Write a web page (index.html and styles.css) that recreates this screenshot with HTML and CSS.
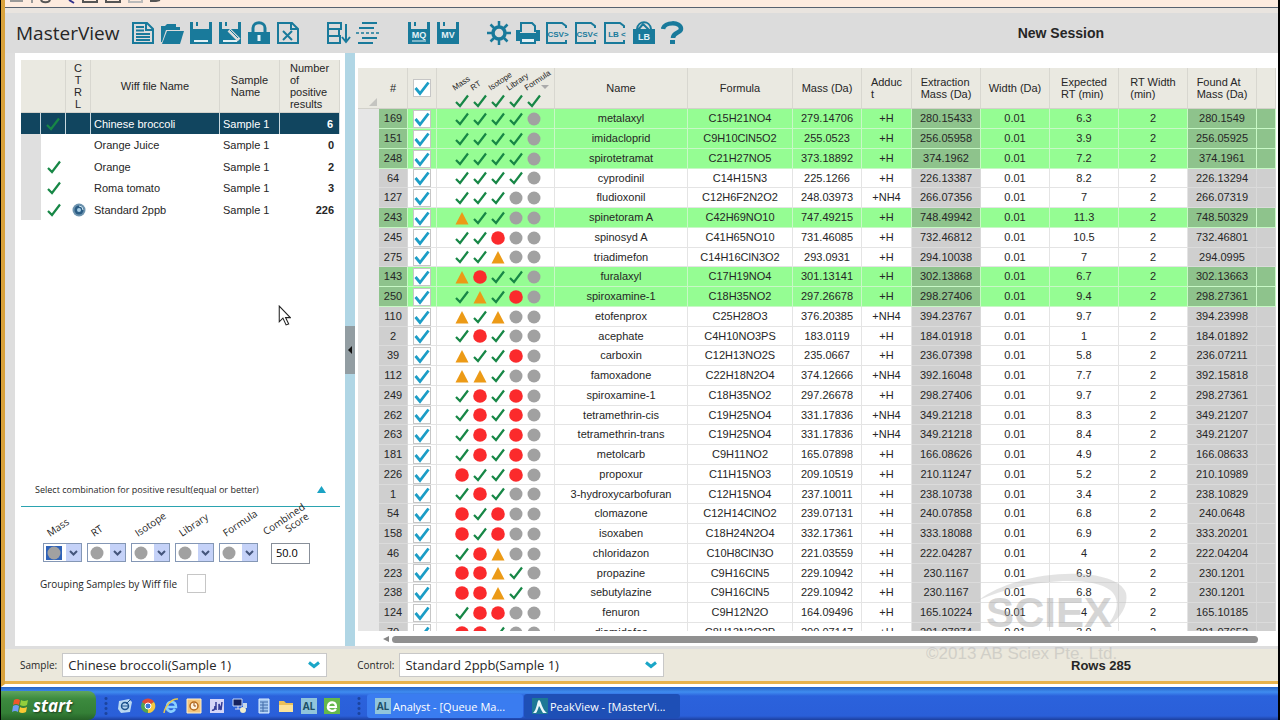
FILE: index.html
```
<!DOCTYPE html>
<html lang="en">
<head>
    <meta charset="UTF-8">
    <meta name="viewport" content="width=device-width, initial-scale=1.0">
    <title>PeakView - MasterView</title>
    <link rel="stylesheet" href="styles.css">
</head>
<body>
    <!-- Shared icon shapes -->
    <svg class="sprite" aria-hidden="true">
        <symbol id="check" viewBox="0 0 14 14"><path d="M1 8 L5 12 L13 1.5" fill="none" stroke="#178746" stroke-width="2.2"/></symbol>
        <symbol id="gray" viewBox="0 0 14 14"><circle cx="7" cy="7" r="6.5" fill="#a1a1a1"/></symbol>
        <symbol id="red" viewBox="0 0 14 14"><circle cx="7" cy="7" r="6.8" fill="#fb2a2c"/></symbol>
        <symbol id="warn" viewBox="0 0 14 14"><path d="M7 1 L13.5 13.5 H0.5 Z" fill="#ec9a16"/></symbol>
        <symbol id="disk" viewBox="0 0 24 24"><path d="M1 1h3v7h16V1h3v22H1z" fill="#197a9b"/><path d="M7 1h2v4H7z" fill="#197a9b"/></symbol>
        <symbol id="sheet" viewBox="0 0 24 24"><path d="M21 7V5l-4-3H2v20h19v-3" fill="none" stroke="#197a9b" stroke-width="2"/></symbol>
    </svg>

    <div class="window">
        <!-- Bottom edge of the main menu icons -->
        <div class="menu-strip">
            <svg width="180" height="6" viewBox="0 0 180 6" fill="none" stroke="#555" stroke-width="2">
                <path d="M5 1h13M27 0v3" stroke="#999"/><path d="M36 0c1 3 8 3 9 0"/><path d="M64 0l5 3" stroke="#31318c"/>
                <path d="M78 0v2h14V0M101 0v2h14V0"/><path d="M124 0v2h13V0" stroke="#bbb"/><path d="M145 1h6l4-1"/>
            </svg>
        </div>

        <!-- Toolbar -->
        <header class="toolbar">
            <h1>MasterView</h1>
            <div class="tools">
                <button title="New"><svg viewBox="0 0 24 24"><path d="M2 2h14l6 6v14H2z" fill="none" stroke="#197a9b" stroke-width="2"/><path d="M15 2v7h7M5 6h8M5 9.500h8M5 13h14M5 16h14M5 19h14" fill="none" stroke="#197a9b" stroke-width="2"/></svg></button>
                <button title="Open"><svg viewBox="0 0 24 24" fill="#197a9b"><path d="M1 21V5h4l2-2h9v3h4v3H6L2 21z"/><path d="M7 10h17l-4 13H2z"/></svg></button>
                <button title="Save"><svg viewBox="0 0 24 24"><use href="#disk"/><path d="M5 19h14v2H5z" fill="#e4f1f5"/></svg></button>
                <button title="Save as"><svg viewBox="0 0 24 24"><use href="#disk"/><path d="M5 19h14v2H5z" fill="#e4f1f5"/><path d="M11 9l10 10" stroke="#dcdcdc" stroke-width="4"/><path d="M12 9l8 8" stroke="#197a9b" stroke-width="1"/></svg></button>
                <button title="Lock"><svg viewBox="0 0 24 24"><path d="M6 12V7c0-7 12-7 12 0v5" fill="none" stroke="#197a9b" stroke-width="3"/><path d="M1 11h22v12H1z" fill="#197a9b"/><path d="M12 14v6" stroke="#e4f1f5" stroke-width="3"/></svg></button>
                <button title="Close file"><svg viewBox="0 0 24 24" fill="none" stroke="#197a9b" stroke-width="2"><path d="M2 2h14l6 6v14H2zM15 2v6h7M7 10l9 9M16 10l-9 9"/></svg></button>
            </div>
            <div class="tools">
                <button title="Sort rows"><svg viewBox="0 0 24 24" fill="none" stroke="#197a9b" stroke-width="2"><path d="M1 2h13v6H1zM1 8h11v7H1zM1 15h12v7H1zM19 3v17M15 16l4 5 4-5"/></svg></button>
                <button title="Group rows"><svg viewBox="0 0 24 24" stroke="#197a9b" stroke-width="2"><path d="M6 2h15M3 7h15M6 17h15M2 22h15"/><path d="M0 12h24" stroke-dasharray="3 2" stroke-width="1.500"/></svg></button>
            </div>
            <div class="tools">
                <button title="Save MQ"><svg viewBox="0 0 24 24"><use href="#disk"/><text x="12" y="17" class="disk-text">MQ</text><path d="M5 20h14" stroke="#e4f1f5"/></svg></button>
                <button title="Save MV"><svg viewBox="0 0 24 24"><use href="#disk"/><text x="12" y="17" class="disk-text">MV</text></svg></button>
            </div>
            <div class="tools">
                <button title="Settings"><svg viewBox="0 0 24 24" fill="none" stroke="#197a9b"><circle cx="12" cy="12" r="6" stroke-width="3.500"/><path d="M12 0v5M12 19v5M0 12h5M19 12h5M3.500 3.500l4 4M16.500 16.500l4 4M20.500 3.500l-4 4M7.500 16.500l-4 4" stroke-width="2.500"/></svg></button>
                <button title="Print"><svg viewBox="0 0 24 24"><path d="M5 11V2h11l3 3v6" fill="none" stroke="#197a9b" stroke-width="2"/><path d="M0 9h4v3h16V9h4v11H0z" fill="#197a9b"/><path d="M5 17h14v5H5z" fill="#e4f1f5" stroke="#197a9b" stroke-width="2"/></svg></button>
                <button title="Export CSV"><svg viewBox="0 0 24 24"><use href="#sheet"/><text x="13" y="16" class="sheet-text">CSV&gt;</text></svg></button>
                <button title="Import CSV"><svg viewBox="0 0 24 24"><use href="#sheet"/><text x="13" y="16" class="sheet-text">CSV&lt;</text></svg></button>
                <button title="Import library"><svg viewBox="0 0 24 24"><use href="#sheet"/><text x="14" y="16" class="sheet-text">LB &lt;</text></svg></button>
                <button title="Library"><svg viewBox="0 0 24 24"><path d="M1 8h22v15H1z" fill="#197a9b"/><path d="M5 8c1-9 13-9 14 0M6 9l5-6 6 6" fill="none" stroke="#197a9b" stroke-width="2"/><text x="12" y="19" class="disk-text">LB</text></svg></button>
                <button title="Help"><svg viewBox="0 0 24 24"><path d="M2 8c1-7 18-8 18 0c0 4-8 3-8 9" fill="none" stroke="#197a9b" stroke-width="4.500"/><path d="M9 19h5v4H9z" fill="#197a9b"/></svg></button>
            </div>
            <div class="session">New Session</div>
        </header>

        <main class="workspace">
            <!-- Sample list -->
            <section class="samples">
                <table class="sample-table">
                    <colgroup><col class="c-head"><col class="c-ok"><col class="c-ok"><col><col class="c-sample"><col class="c-sample"></colgroup>
                    <thead>
                        <tr>
                            <th class="plain"></th><th></th><th>C<br>T<br>R<br>L</th><th>Wiff file Name</th>
                            <th><span>Sample<br>Name</span></th><th><span>Number<br>of<br>positive<br>results</span></th>
                        </tr>
                    </thead>
                    <tbody>
                        <tr class="selected"><td></td><td><svg class="mark"><use href="#check"/></svg></td><td></td><td>Chinese broccoli</td><td>Sample 1</td><td>6</td></tr>
                        <tr><td></td><td></td><td></td><td>Orange Juice</td><td>Sample 1</td><td>0</td></tr>
                        <tr><td></td><td><svg class="mark"><use href="#check"/></svg></td><td></td><td>Orange</td><td>Sample 1</td><td>2</td></tr>
                        <tr><td></td><td><svg class="mark"><use href="#check"/></svg></td><td></td><td>Roma tomato</td><td>Sample 1</td><td>3</td></tr>
                        <tr><td></td><td><svg class="mark"><use href="#check"/></svg></td><td><svg class="mark" viewBox="0 0 14 14"><circle cx="7" cy="7" r="6.500" fill="#6d93ae"/><circle cx="7" cy="7" r="4.500" fill="#2b5d85"/><circle cx="7" cy="7" r="2" fill="#a9cfe6"/><path d="M7 3a4 4 0 0 1 4 4" fill="none" stroke="#cfe6f2"/></svg></td><td>Standard 2ppb</td><td>Sample 1</td><td>226</td></tr>
                    </tbody>
                </table>

                <div class="criteria">
                    <div class="criteria-title">Select combination for positive result(equal or better)
                        <svg width="9" height="7" viewBox="0 0 9 7"><path d="M4.500 0L9 7H0z" fill="#1ba3c4"/></svg>
                    </div>
                    <div class="scores">
                        <div class="score"><label for="s-mass">Mass</label><div class="pick active"><select id="s-mass"></select><svg class="mark"><use href="#gray"/></svg></div></div>
                        <div class="score"><label for="s-rt">RT</label><div class="pick"><select id="s-rt"></select><svg class="mark"><use href="#gray"/></svg></div></div>
                        <div class="score"><label for="s-iso">Isotope</label><div class="pick"><select id="s-iso"></select><svg class="mark"><use href="#gray"/></svg></div></div>
                        <div class="score"><label for="s-lib">Library</label><div class="pick"><select id="s-lib"></select><svg class="mark"><use href="#gray"/></svg></div></div>
                        <div class="score"><label for="s-for">Formula</label><div class="pick"><select id="s-for"></select><svg class="mark"><use href="#gray"/></svg></div></div>
                        <div class="score combined"><label for="s-all">Combined<br>Score</label><input id="s-all" type="text" value="50.0"></div>
                    </div>
                    <div class="grouping">
                        <label for="grouping">Grouping Samples by Wiff file</label>
                        <input id="grouping" type="checkbox">
                    </div>
                </div>
            </section>

            <button class="splitter" title="Collapse"><span><svg width="4" height="8" viewBox="0 0 4 8"><path d="M4 0v8L0 4z" fill="#111"/></svg></span></button>

            <!-- Compound results -->
            <section class="results">
                <div class="grid-view">
                    <table class="grid">
                        <colgroup>
                            <col class="w-edge"><col class="w-num"><col class="w-num"><col class="w-status"><col><col class="w-formula">
                            <col class="w-mass"><col class="w-adduct"><col class="w-mass"><col class="w-mass"><col class="w-mass"><col class="w-mass"><col class="w-mass"><col class="w-last">
                        </colgroup>
                        <thead>
                            <tr>
                                <th class="corner"><svg width="8" height="8" viewBox="0 0 8 8"><path d="M8 0v8H0z" fill="#c4c4c0"/></svg></th>
                                <th>#</th>
                                <th><input type="checkbox" checked aria-label="Select all"></th>
                                <th class="status-head">
                                    <div class="slants"><span>Mass</span><span>RT</span><span>Isotope</span><span>Library</span><span>Formula</span></div>
                                    <div class="marks"><svg class="mark"><use href="#check"/></svg><svg class="mark"><use href="#check"/></svg><svg class="mark"><use href="#check"/></svg><svg class="mark"><use href="#check"/></svg><svg class="mark"><use href="#check"/></svg></div>
                                    <svg class="sort" viewBox="0 0 8 4"><path d="M0 0h8L4 4z" fill="#aaa"/></svg>
                                </th>
                                <th>Name</th><th>Formula</th><th>Mass (Da)</th><th><span>Adduc<br>t</span></th>
                                <th><span>Extraction<br>Mass (Da)</span></th><th>Width (Da)</th><th><span>Expected<br>RT (min)</span></th>
                                <th><span>RT Width<br>(min)</span></th><th><span>Found At<br>Mass (Da)</span></th><th></th>
                            </tr>
                        </thead>
                        <tbody id="rows"></tbody>
                    </table>
                </div>
                <div class="scrollbar">
                    <svg width="6" height="6" viewBox="0 0 6 6"><path d="M6 0v6L0 3z" fill="#888"/></svg>
                    <div class="thumb"></div>
                </div>
            </section>
        </main>

        <footer class="status-bar">
            <label for="sample">Sample:</label>
            <select id="sample"><option>Chinese broccoli(Sample 1)</option></select>
            <label class="control" for="control">Control:</label>
            <select id="control"><option>Standard 2ppb(Sample 1)</option></select>
            <strong>Rows 285</strong>
        </footer>

        <div class="watermark">
            <svg viewBox="0 0 160 64">
                <path d="M3 27C45-5 140-8 150 20c3 14-8 28-20 34c12-14 15-28 4-37C115 2 50 6 3 27z" fill="#bbb"/>
                <text x="10" y="54">SCIEX</text>
            </svg>
            <div>©2013 AB Sciex Pte. Ltd.</div>
        </div>

        <svg class="pointer" viewBox="0 0 12 20"><path d="M1 1v15l3.500-3.500L7.500 19l2.500-1-3-6h4.500z" fill="#fff" stroke="#222"/></svg>
    </div>

    <!-- Taskbar -->
    <nav class="taskbar">
        <button class="start">
            <svg width="18" height="18" viewBox="0 0 18 18"><path d="M3 3q3-2 6 0L8 8q-3-2-6 0z" fill="#f0562b"/><path d="M10 3q3 2 7 0l-1 5q-3 2-7 0z" fill="#93cf3c"/><path d="M2 9q3-2 6 0l-1 6q-3-2-6 0z" fill="#6e9df2"/><path d="M9 10q3 2 7 0l-1 5q-4 2-7 0z" fill="#fbc934"/></svg>
            start
        </button>
        <div class="grip"></div>
        <div class="quick">
            <svg viewBox="0 0 16 16"><path d="M2 3l10-2 3 3-2 10-9 1-3-4z" fill="#b9d8f2"/><circle cx="8" cy="8" r="3.500" fill="none" stroke="#20568e" stroke-width="1.500"/><path d="M5 8h7M9 6l5-5" stroke="#20568e"/></svg>
            <svg viewBox="0 0 16 16"><circle cx="8" cy="8" r="7" fill="#52a352"/><path d="M2 4a7 7 0 0 1 12 0L8 8z" fill="#dd4b39"/><path d="M14 4a7 7 0 0 1-6 11V8z" fill="#f5c842"/><circle cx="8" cy="8" r="3" fill="#3b78d8" stroke="#fff"/></svg>
            <svg viewBox="0 0 16 16" fill="none"><path d="M12 11c-3 5-9 2-8-3c1-6 9-5 9 1H5" stroke="#8bd0ff" stroke-width="2.500"/><path d="M1 15C2 8 9 0 15 1" stroke="#e9c84c" stroke-width="1.500"/></svg>
            <svg viewBox="0 0 16 16"><path d="M1 1h14v14H1z" fill="#f4c47a" stroke="#fff1cc"/><circle cx="8" cy="8" r="4" fill="#fff3dd" stroke="#b56a1d" stroke-width="1.500"/><path d="M8 5v3h2" fill="none" stroke="#934e14"/></svg>
            <svg viewBox="0 0 16 16"><path d="M1 1h14v14H1z" fill="#d5d6f8"/><path d="M3 12c2 1 3-1 3-4M7 12V4M10 12V6l2 6 1-8" fill="none" stroke="#333d99" stroke-width="1.500"/></svg>
            <svg viewBox="0 0 16 16"><path d="M1 1h9v7H1z" fill="#16215f" stroke="#c8ddff"/><path d="M3 11h7M6 8v3" stroke="#dde"/><circle cx="11" cy="12" r="3" fill="#f1eecd"/><path d="M11 5h4v5h-4z" fill="#c9d9e8"/></svg>
            <svg viewBox="0 0 16 16"><path d="M4 1h10v14H4z" fill="#9fc4ef" stroke="#dceeff"/><path d="M5 4h8M5 7h8M5 10h8M5 13h8M8 4v10" stroke="#426da9"/></svg>
            <svg viewBox="0 0 16 16"><path d="M1 3h5l2 2h7v9H1z" fill="#eac059"/><path d="M1 7h14v7H1z" fill="#fbe39a"/></svg>
            <svg viewBox="0 0 16 16"><path d="M0 0h16v16H0z" fill="#91c5db"/><text x="8" y="12" class="al-text">AL</text></svg>
            <svg viewBox="0 0 16 16"><path d="M0 0h16v16H0z" fill="#65b84b"/><path d="M12 11c-3 4-9 1-8-3c1-5 8-5 8 1H5" fill="none" stroke="#fff" stroke-width="2.200"/></svg>
        </div>
        <div class="grip"></div>
        <button class="task"><svg width="16" height="16" viewBox="0 0 16 16"><path d="M0 0h16v16H0z" fill="#91c5db"/><text x="8" y="12" class="al-text">AL</text></svg>Analyst - [Queue Ma...</button>
        <button class="task current"><svg width="16" height="16" viewBox="0 0 16 16"><path d="M0 0h16v16H0z" fill="#1d7896"/><path d="M1 15C5 12 5 2 7 2s3 10 8 13h-4C9 12 8 9 7 8c-1 3-2 6-3 7z" fill="#e9f7fa"/></svg>PeakView - [MasterVi...</button>
    </nav>

    <script src="script.js"></script>
</body>
</html>
```
FILE: styles.css
```
* {
    box-sizing: border-box;
}

body {
    margin: 0;
    height: 100vh;
    display: flex;
    flex-direction: column;
    padding: 0 2px 0 1px;
    overflow: hidden;
    background-color: #000;
    color: #262626;
    font-family: "Liberation Sans", Arial, sans-serif;
    font-size: 11px;
}

button {
    border: none;
    padding: 0;
    background: none;
    font: inherit;
    cursor: pointer;
}

svg {
    display: block;
}

.sprite {
    position: absolute;
    width: 0;
    height: 0;
}

.window {
    position: relative;
    flex: 1;
    min-height: 0;
    display: flex;
    flex-direction: column;
    border-left: 4px solid #d9a23c;
    border-bottom: 3px solid #fff;
    background-color: #ebe8dc;
}

.menu-strip {
    height: 8px;
    flex: none;
    overflow: hidden;
    background-color: #fdebdf;
    border-bottom: 1px solid #56616f;
}

/* Toolbar */
.toolbar {
    flex: none;
    display: flex;
    align-items: center;
    height: 45px;
    padding: 0 174px 0 11px;
    background-color: #dcdcdc;
    border-top: 5px solid #e9e4df;
}

.toolbar h1 {
    width: 115px;
    margin: 0;
    font-family: "Open Sans", sans-serif;
    font-size: 19px;
    font-weight: normal;
}

.tools {
    display: flex;
    gap: 5px;
    margin-right: 27px;
}

.tools svg {
    width: 24px;
    height: 24px;
}

.disk-text {
    fill: #e4f1f5;
    font-size: 9px;
    font-weight: bold;
    text-anchor: middle;
}

.sheet-text {
    fill: #197a9b;
    font-size: 8px;
    font-weight: bold;
    text-anchor: middle;
}

.session {
    margin-left: auto;
    font-size: 14px;
    font-weight: bold;
}

/* Workspace */
.workspace {
    flex: 1;
    min-height: 0;
    display: flex;
    padding: 0 0 3px 10px;
    background-color: #dedede;
}

.samples {
    width: 330px;
    display: flex;
    flex-direction: column;
    padding: 7px 5px 0 6px;
    background-color: #fff;
}

table {
    width: 100%;
    table-layout: fixed;
    border-collapse: separate;
    border-spacing: 0;
}

th,
td {
    padding: 0;
    white-space: nowrap;
    text-align: center;
    font-weight: normal;
}

th {
    background-color: #eae9e1;
    border-right: 1px solid #d8d7d0;
    border-bottom: 1px solid #d2d1ca;
    line-height: 12px;
}

th span {
    display: inline-block;
    text-align: left;
}

.mark {
    width: 14px;
    height: 14px;
}

.sample-table .c-head {
    width: 20px;
}

.sample-table .c-ok {
    width: 25px;
}

.sample-table .c-sample {
    width: 60px;
}

.sample-table th {
    height: 53px;
}

.sample-table .plain {
    border-right: none;
}

.sample-table td {
    height: 22px;
    text-align: left;
    padding-left: 3px;
}

.sample-table tr:nth-child(odd) td {
    height: 21px;
}

.sample-table td:nth-child(-n+3) {
    padding-left: 0;
}

.sample-table td .mark {
    margin: auto;
}

.sample-table td:first-child {
    background-color: #dfdfdf;
}

.sample-table td:last-child {
    padding-right: 6px;
    text-align: right;
    font-weight: bold;
}

.sample-table .selected td {
    background-color: #11455f;
    border-right: 1px solid #c9d8df;
    color: #fff;
}

/* Positive result criteria */
.criteria {
    margin-top: auto;
    height: 166px;
    font-family: "Open Sans", sans-serif;
}

.criteria-title {
    display: flex;
    align-items: center;
    justify-content: space-between;
    height: 27px;
    padding: 0 14px 7px;
    border-bottom: 1px solid #2ba3b0;
    font-size: 9px;
}

.scores {
    display: flex;
    gap: 5px;
    height: 57px;
    padding-left: 22px;
}

.score {
    width: 39px;
    display: flex;
    flex-direction: column;
}

.score label {
    height: 36px;
    padding-top: 19px;
    padding-left: 7px;
    font-size: 10px;
    line-height: 14px;
    white-space: nowrap;
    transform: rotate(-34deg);
    transform-origin: 7px 30px;
}

.combined {
    margin-left: 8px;
}

.combined label {
    padding-top: 18px;
    padding-left: 0;
    line-height: 10px;
    text-align: right;
    width: 46px;
    transform-origin: 0 36px;
}

.combined input {
    width: 39px;
    height: 21px;
    padding: 0 0 3px 4px;
    border: 1px solid #888f99;
    font: 11px "Open Sans", sans-serif;
}

.pick {
    display: grid;
    align-items: center;
}

.pick > * {
    grid-area: 1 / 1;
}

.pick select {
    width: 39px;
    height: 19px;
    appearance: none;
    border: 1px solid #8497b5;
    border-radius: 0;
    background: url("data:image/svg+xml,%3Csvg xmlns='http://www.w3.org/2000/svg' viewBox='0 0 15 17'%3E%3Cpath d='M0 0h15v17H0z' fill='%23c5d2f8'/%3E%3Cpath d='M4 7l3.500 3.500L11 7' fill='none' stroke='%2344557c' stroke-width='2'/%3E%3C/svg%3E") right center / 15px 17px no-repeat #fff;
}

.pick .mark {
    margin-left: 3px;
    pointer-events: none;
}

.active .mark {
    width: 16px;
    background-color: #2f62b8;
}

.grouping {
    display: flex;
    align-items: center;
    gap: 5px;
    padding: 10px 0 0 19px;
    font-size: 10px;
}

input[type="checkbox"] {
    appearance: none;
    display: block;
    width: 18px;
    height: 18px;
    margin: 0 auto;
    border: 1px solid #c6c6c6;
    background-color: #fff;
}

input[type="checkbox"]:checked {
    background-image: url("data:image/svg+xml,%3Csvg xmlns='http://www.w3.org/2000/svg' viewBox='0 0 16 16'%3E%3Cpath d='M1.500 8L6 13.500 14.500 2.500' fill='none' stroke='%231b9dc6' stroke-width='2.800'/%3E%3C/svg%3E");
}

.grouping input[type="checkbox"] {
    width: 19px;
    height: 19px;
    margin: 0 0 0 5px;
}

/* Splitter */
.splitter {
    display: flex;
    align-items: center;
    width: 10px;
    background-color: #b0d6e5;
}

.splitter span {
    display: flex;
    align-items: center;
    justify-content: center;
    width: 10px;
    height: 48px;
    background-color: #929da2;
}

/* Results grid */
.results {
    flex: 1;
    min-width: 0;
    display: flex;
    flex-direction: column;
    padding: 15px 2px 0 3px;
    background-color: #fff;
}

.grid-view {
    flex: 1;
    min-height: 0;
    overflow: hidden;
}

.grid .w-edge {
    width: 21px;
}

.grid .w-num {
    width: 29px;
}

.grid .w-status {
    width: 118px;
}

.grid .w-formula {
    width: 105px;
}

.grid .w-mass {
    width: 69px;
}

.grid .w-adduct {
    width: 50px;
}

.grid .w-last {
    width: 19px;
}

.grid th {
    height: 41px;
}

.grid .corner {
    border-right: none;
    vertical-align: bottom;
}

.corner svg {
    margin: 0 2px 2px auto;
}

.grid td {
    height: 20px;
    border-right: 1px solid #e4e4e4;
    border-bottom: 1px solid #e4e4e4;
    line-height: 19px;
}

.grid tr:nth-child(4n) td {
    height: 19px;
    line-height: 18px;
}

.grid td:first-child {
    background-color: #e6e6e6;
    border-color: #e6e6e6;
}

.grid td:nth-child(2),
.grid td:nth-child(9),
.grid td:nth-child(13),
.grid td:nth-child(14) {
    background-color: #cfcfcf;
    border-right-color: #d9d9d9;
    border-bottom-color: #dbdbdb;
}

.grid .match td:not(:first-child) {
    background-color: #95fd93;
    border-color: #c8f8c6;
}

.grid .match td:nth-child(2),
.grid .match td:nth-child(9),
.grid .match td:nth-child(13),
.grid .match td:nth-child(14) {
    background-color: #8ec38c;
}

.marks {
    display: flex;
    gap: 4px;
    padding-left: 18px;
}

.status-head {
    position: relative;
    vertical-align: bottom;
}

.slants {
    display: flex;
    gap: 4px;
    padding-left: 20px;
    font-size: 8px;
}

.slants span {
    width: 14px;
    white-space: nowrap;
    transform: rotate(-34deg);
    transform-origin: 0 100%;
}

.sort {
    position: absolute;
    right: 5px;
    top: 17px;
    width: 8px;
    height: 4px;
}

.scrollbar {
    display: flex;
    align-items: center;
    gap: 3px;
    height: 14px;
    padding: 0 18px 0 25px;
    margin-top: 1px;
}

.thumb {
    flex: 1;
    height: 7px;
    border-radius: 4px;
    background-color: #909090;
}

/* Status bar */
.status-bar {
    flex: none;
    display: flex;
    align-items: center;
    height: 35px;
    padding: 0 147px 0 15px;
    border-bottom: 3px solid #e6b24c;
    font-family: "Open Sans", sans-serif;
    font-size: 10px;
}

.status-bar select {
    width: 265px;
    height: 24px;
    appearance: none;
    margin-left: 5px;
    padding: 0 5px;
    border: 1px solid #c8c8c8;
    border-radius: 0;
    background: url("data:image/svg+xml,%3Csvg xmlns='http://www.w3.org/2000/svg' viewBox='0 0 12 8'%3E%3Cpath d='M1 1.500l5 4 5-4' fill='none' stroke='%231aa6c7' stroke-width='3'/%3E%3C/svg%3E") right 6px center / 12px 8px no-repeat #fff;
    color: #262626;
    font: 13px "Open Sans", sans-serif;
}

.status-bar .control {
    margin-left: 30px;
}

.status-bar strong {
    margin-left: auto;
    font: bold 13px "Liberation Sans", Arial, sans-serif;
}

.watermark {
    position: absolute;
    right: 142px;
    bottom: 19px;
    width: 210px;
    color: #aaa;
    font-size: 17px;
    line-height: 22px;
    opacity: 0.4;
    pointer-events: none;
}

.watermark svg {
    width: 160px;
    margin: 0 0 6px 50px;
}

.watermark text {
    fill: #999;
    font-size: 42px;
    font-weight: bold;
}

.pointer {
    position: absolute;
    left: 273px;
    top: 305px;
    width: 13px;
    height: 21px;
}

/* Taskbar */
.taskbar {
    flex: none;
    display: flex;
    align-items: stretch;
    height: 33px;
    padding-top: 4px;
    background: linear-gradient(#2563c4 0, #3f8cf0 5px, #2b62dc 9px, #2a5fd9 29px, #1c3f9e 33px);
    font-family: "Open Sans", sans-serif;
}

.start {
    display: flex;
    align-items: center;
    gap: 4px;
    width: 95px;
    padding-left: 10px;
    border-radius: 0 8px 8px 0;
    background: linear-gradient(#5fa55d, #3c8a3e 8px, #347f36 22px, #256127);
    color: #fff;
    font-size: 17px;
    font-style: italic;
    font-weight: bold;
    text-shadow: 1px 1px 2px #1d3d1e;
}

.grip {
    width: 4px;
    margin: 5px 0 5px 8px;
    background: radial-gradient(circle, #1b449f 1px, transparent 2px) 0 0 / 4px 5px;
}

.quick {
    display: flex;
    align-items: center;
    gap: 7px;
    padding: 0 9px;
}

.quick svg {
    width: 16px;
    height: 16px;
}

.al-text {
    fill: #1c4f66;
    font-size: 10px;
    font-weight: bold;
    text-anchor: middle;
}

.task {
    display: flex;
    align-items: center;
    gap: 2px;
    width: 156px;
    margin: 3px 1px 2px 0;
    padding-left: 8px;
    border-radius: 3px;
    background-color: #3a7cf0;
    color: #fff;
    white-space: nowrap;
}

.grip + .task {
    margin-left: 6px;
}

.task.current {
    background-color: #1e4fb6;
}
```
FILE: script.js
```
// c = check, g = gray, r = red, t = triangle
const icons = { c: "check", g: "gray", r: "red", t: "warn" };

// #, scores, name, formula, mass, adduct, extraction mass, expected RT, found at mass, highlighted
const compounds = [
    [169, "ccccg", "metalaxyl", "C15H21NO4", "279.14706", "+H", "280.15433", "6.3", "280.1549", 1],
    [151, "ccccg", "imidacloprid", "C9H10ClN5O2", "255.0523", "+H", "256.05958", "3.9", "256.05925", 1],
    [248, "ccccg", "spirotetramat", "C21H27NO5", "373.18892", "+H", "374.1962", "7.2", "374.1961", 1],
    [64, "ccccg", "cyprodinil", "C14H15N3", "225.1266", "+H", "226.13387", "8.2", "226.13294"],
    [127, "cccgg", "fludioxonil", "C12H6F2N2O2", "248.03973", "+NH4", "266.07356", "7", "266.07319"],
    [243, "tccgg", "spinetoram A", "C42H69NO10", "747.49215", "+H", "748.49942", "11.3", "748.50329", 1],
    [245, "ccrgg", "spinosyd A", "C41H65NO10", "731.46085", "+H", "732.46812", "10.5", "732.46801"],
    [275, "cctgg", "triadimefon", "C14H16ClN3O2", "293.0931", "+H", "294.10038", "7", "294.0995"],
    [143, "trccg", "furalaxyl", "C17H19NO4", "301.13141", "+H", "302.13868", "6.7", "302.13663", 1],
    [250, "ctcrg", "spiroxamine-1", "C18H35NO2", "297.26678", "+H", "298.27406", "9.4", "298.27361", 1],
    [110, "tctgg", "etofenprox", "C25H28O3", "376.20385", "+NH4", "394.23767", "9.7", "394.23998"],
    [2, "crcgg", "acephate", "C4H10NO3PS", "183.0119", "+H", "184.01918", "1", "184.01892"],
    [39, "tccrg", "carboxin", "C12H13NO2S", "235.0667", "+H", "236.07398", "5.8", "236.07211"],
    [112, "ttcgg", "famoxadone", "C22H18N2O4", "374.12666", "+NH4", "392.16048", "7.7", "392.15818"],
    [249, "crcrg", "spiroxamine-1", "C18H35NO2", "297.26678", "+H", "298.27406", "9.7", "298.27361"],
    [262, "crcrg", "tetramethrin-cis", "C19H25NO4", "331.17836", "+NH4", "349.21218", "8.3", "349.21207"],
    [263, "crcrg", "tetramethrin-trans", "C19H25NO4", "331.17836", "+NH4", "349.21218", "8.4", "349.21207"],
    [181, "crcrg", "metolcarb", "C9H11NO2", "165.07898", "+H", "166.08626", "4.9", "166.08633"],
    [226, "rccrg", "propoxur", "C11H15NO3", "209.10519", "+H", "210.11247", "5.2", "210.10989"],
    [1, "crcgg", "3-hydroxycarbofuran", "C12H15NO4", "237.10011", "+H", "238.10738", "3.4", "238.10829"],
    [54, "rcrgg", "clomazone", "C12H14ClNO2", "239.07131", "+H", "240.07858", "6.8", "240.0648"],
    [158, "rcrgg", "isoxaben", "C18H24N2O4", "332.17361", "+H", "333.18088", "6.9", "333.20201"],
    [46, "crtgg", "chloridazon", "C10H8ClN3O", "221.03559", "+H", "222.04287", "4", "222.04204"],
    [223, "rrtcg", "propazine", "C9H16ClN5", "229.10942", "+H", "230.1167", "6.9", "230.1201"],
    [238, "rrtcg", "sebutylazine", "C9H16ClN5", "229.10942", "+H", "230.1167", "6.8", "230.1201"],
    [124, "crrgg", "fenuron", "C9H12N2O", "164.09496", "+H", "165.10224", "4", "165.10185"],
    [70, "rrcgg", "diamidafos", "C8H13N2O2P", "200.07147", "+H", "201.07874", "3.9", "201.07652"]
];

document.getElementById("rows").innerHTML = compounds.map(([id, scores, name, formula, mass, adduct, extraction, rt, found, match]) => {
    const marks = [...scores].map(s => `<svg class="mark"><use href="#${icons[s]}"/></svg>`).join("");
    return `<tr class="${match ? "match" : ""}">
        <td></td><td>${id}</td><td><input type="checkbox" checked aria-label="${name}"></td>
        <td><div class="marks">${marks}</div></td>
        <td>${name}</td><td>${formula}</td><td>${mass}</td><td>${adduct}</td><td>${extraction}</td>
        <td>0.01</td><td>${rt}</td><td>2</td><td>${found}</td><td></td>
    </tr>`;
}).join("");
```
